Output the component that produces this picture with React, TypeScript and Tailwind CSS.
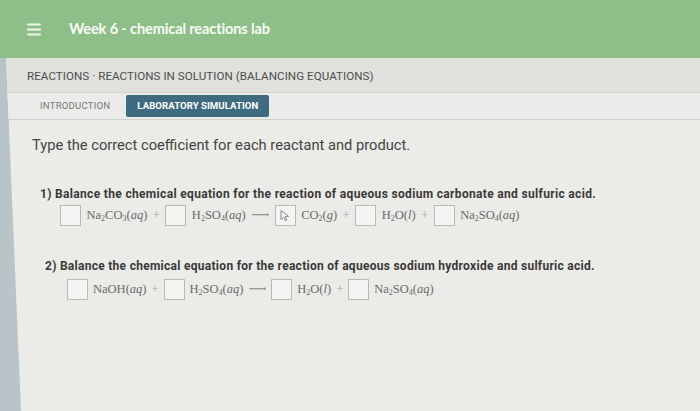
import React from "react";

const serif = { fontFamily: '"Liberation Serif", "DejaVu Serif", serif' };

function Box({ cursor = false }: { cursor?: boolean }) {
  return (
    <span className="inline-flex h-[21px] w-[21px] shrink-0 items-center justify-center border border-[#b9b9b7] bg-[#f4f4f2]">
      {cursor && (
        <svg width="12" height="13" viewBox="0 0 12 13" fill="none">
          <path d="M2 1.5 L2 10.5 L4.6 8.2 L6.4 11.8 L7.8 11.1 L6.1 7.6 L9.6 7.4 Z" stroke="#8a8a88" strokeWidth="1" strokeLinejoin="round" fill="#f4f4f2" />
        </svg>
      )}
    </span>
  );
}

function Sp({ n }: { n: string }) {
  return <sub className="relative top-[2px] align-baseline text-[8px] leading-none">{n}</sub>;
}

function Term({ children }: { children: React.ReactNode }) {
  return (
    <span className="whitespace-nowrap text-[12.5px] text-[#6a6a68]" style={serif}>
      {children}
    </span>
  );
}

const Plus = () => <span className="text-[12.5px] text-[#a6a6a4]" style={serif}>+</span>;
const Arrow = () => <span className="text-[12.5px] text-[#8a8a88]" style={serif}>⟶</span>;

export default function App() {
  return (
    <div className="flex h-[411px] w-[700px] flex-col overflow-hidden bg-[#b8c4c8]" style={{ fontFamily: 'Roboto, "Open Sans", sans-serif' }}>
      {/* top bar */}
      <header className="flex h-[58px] shrink-0 items-center bg-[#8ebf88] pl-[27px]">
        <svg width="14" height="13" viewBox="0 0 14 13" className="mt-[1px]">
          <rect x="0" y="0.5" width="14" height="2" rx="1" fill="#eef6ec" />
          <rect x="0" y="5.5" width="14" height="2" rx="1" fill="#eef6ec" />
          <rect x="0" y="10.5" width="14" height="2" rx="1" fill="#eef6ec" />
        </svg>
        <h1 className="ml-[28px] text-[14.6px] font-bold tracking-[-0.15px] text-[#f8fbf6]" style={{ fontFamily: 'Lato, "Open Sans", sans-serif' }}>
          Week 6 - chemical reactions lab
        </h1>
      </header>

      {/* page panel */}
      <main className="flex flex-1 flex-col bg-[#ebebe8] [clip-path:polygon(6px_0,100%_0,100%_100%,21px_100%)]">
        <div className="flex h-[35px] shrink-0 items-center border-b border-[#d2d2cf] bg-[#e0e0dd] pl-[27px] pt-[3px]">
          <span className="text-[11.6px] tracking-[0.05px] text-[#4e4e4c]">
            REACTIONS · REACTIONS IN SOLUTION (BALANCING EQUATIONS)
          </span>
        </div>

        <div className="flex h-[27px] shrink-0 items-center border-b border-[#cfcfcc] bg-[#ebebe9] pl-[40px]">
          <span className="text-[9.6px] tracking-[0.2px] text-[#7a7a78]">INTRODUCTION</span>
          <span className="ml-[16px] flex h-[22px] items-center rounded-[2px] bg-[#3f6b80] px-[11px] text-[9.6px] font-bold tracking-[0.05px] text-white">
            LABORATORY SIMULATION
          </span>
        </div>

        <div className="flex flex-col pl-[32px] pt-[14px]">
          <p className="text-[14.7px] text-[#454543]">Type the correct coefficient for each reactant and product.</p>

          <div className="ml-[8px] mt-[29px]">
            <p className="text-[12px] font-bold tracking-[0.33px] text-[#3a3a38]">
              1) Balance the chemical equation for the reaction of aqueous sodium carbonate and sulfuric acid.
            </p>
            <div className="ml-[20px] mt-[2px] flex items-center gap-[5.5px]">
              <Box />
              <Term>Na<Sp n="2" />CO<Sp n="3" />(<i>aq</i>)</Term>
              <Plus />
              <Box />
              <Term>H<Sp n="2" />SO<Sp n="4" />(<i>aq</i>)</Term>
              <Arrow />
              <Box cursor />
              <Term>CO<Sp n="2" />(<i>g</i>)</Term>
              <Plus />
              <Box />
              <Term>H<Sp n="2" />O(<i>l</i>)</Term>
              <Plus />
              <Box />
              <Term>Na<Sp n="2" />SO<Sp n="4" />(<i>aq</i>)</Term>
            </div>
          </div>

          <div className="ml-[13px] mt-[31px]">
            <p className="text-[12px] font-bold tracking-[0.28px] text-[#3a3a38]">
              2) Balance the chemical equation for the reaction of aqueous sodium hydroxide and sulfuric acid.
            </p>
            <div className="ml-[22px] mt-[4px] flex items-center gap-[5px]">
              <Box />
              <Term>NaOH(<i>aq</i>)</Term>
              <Plus />
              <Box />
              <Term>H<Sp n="2" />SO<Sp n="4" />(<i>aq</i>)</Term>
              <Arrow />
              <Box />
              <Term>H<Sp n="2" />O(<i>l</i>)</Term>
              <Plus />
              <Box />
              <Term>Na<Sp n="2" />SO<Sp n="4" />(<i>aq</i>)</Term>
            </div>
          </div>
        </div>
      </main>
    </div>
  );
}
